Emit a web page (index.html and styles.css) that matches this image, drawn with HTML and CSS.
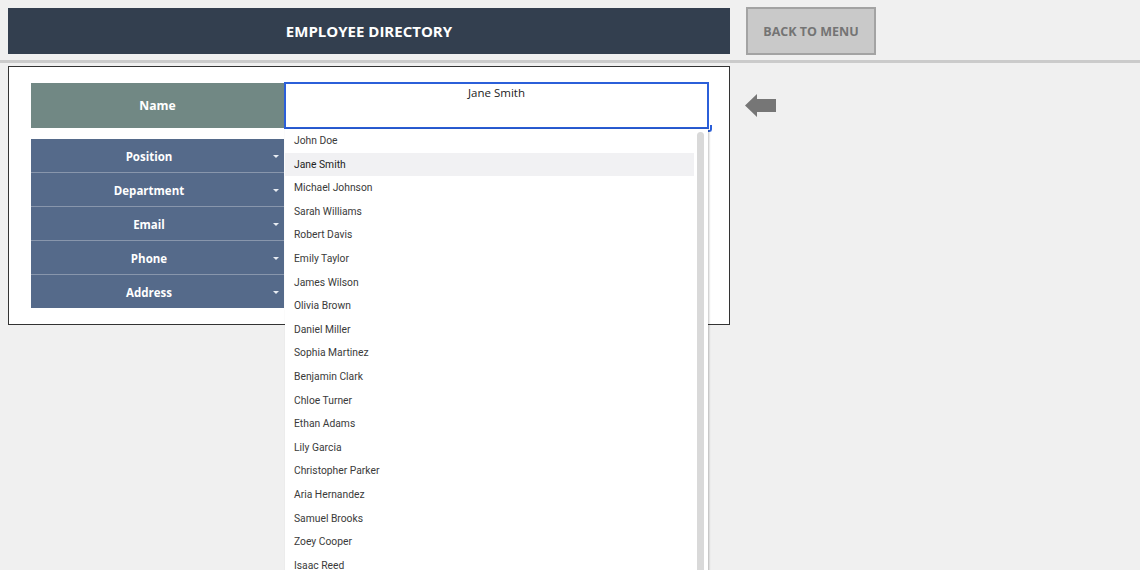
FILE: index.html
```html
<!DOCTYPE html>
<html>
<head>
<meta charset="utf-8">
<link rel="stylesheet" href="styles.css">
</head>
<body>
<div class="topbar">
  <div class="title">EMPLOYEE DIRECTORY</div>
  <div class="back-btn">BACK TO MENU</div>
</div>
<div class="main">
  <div class="panel">
    <div class="name-row">
      <div class="name-label">Name</div>
      <div class="name-field">
        <div class="name-input">Jane Smith</div>
        <span class="corner"></span>
        <div class="dropdown">
          <div class="list">
            <div class="item">John Doe</div>
            <div class="item active">Jane Smith</div>
            <div class="item">Michael Johnson</div>
            <div class="item">Sarah Williams</div>
            <div class="item">Robert Davis</div>
            <div class="item">Emily Taylor</div>
            <div class="item">James Wilson</div>
            <div class="item">Olivia Brown</div>
            <div class="item">Daniel Miller</div>
            <div class="item">Sophia Martinez</div>
            <div class="item">Benjamin Clark</div>
            <div class="item">Chloe Turner</div>
            <div class="item">Ethan Adams</div>
            <div class="item">Lily Garcia</div>
            <div class="item">Christopher Parker</div>
            <div class="item">Aria Hernandez</div>
            <div class="item">Samuel Brooks</div>
            <div class="item">Zoey Cooper</div>
            <div class="item">Isaac Reed</div>
          </div>
          <div class="scroll"><div class="thumb"></div></div>
        </div>
      </div>
    </div>
    <div class="fields">
      <div class="field"><span class="flabel">Position</span><span class="caret"></span></div>
      <div class="field"><span class="flabel">Department</span><span class="caret"></span></div>
      <div class="field"><span class="flabel">Email</span><span class="caret"></span></div>
      <div class="field"><span class="flabel">Phone</span><span class="caret"></span></div>
      <div class="field"><span class="flabel">Address</span><span class="caret"></span></div>
    </div>
  </div>
  <svg class="arrow" width="31" height="23" viewBox="0 0 31 23">
    <polygon points="0,11.5 12,0 12,5 31,5 31,18 12,18 12,23" fill="#767676"/>
  </svg>
</div>
</body>
</html>
```
FILE: styles.css
```css
html, body {
  margin: 0;
  padding: 0;
  overflow: hidden;
  height: 100%;
}
body {
  background: #f0f0f0;
  font-family: "Open Sans", "Liberation Sans", sans-serif;
}
.topbar {
  display: flex;
  align-items: center;
  padding: 7px 0 0 8px;
  height: 53px;
  box-sizing: content-box;
  border-bottom: 3px solid #cbcbcb;
}
.title {
  width: 722px;
  height: 46px;
  margin-top: -5px;
  background: #333f4f;
  color: #ffffff;
  font-weight: 700;
  font-size: 15px;
  display: flex;
  align-items: center;
  justify-content: center;
}
.back-btn {
  margin-left: 16px;
  margin-top: -5px;
  width: 130px;
  height: 48px;
  box-sizing: border-box;
  background: #c9c9c9;
  border: 2px solid #a3a3a3;
  color: #747474;
  font-weight: 700;
  font-size: 12.5px;
  display: flex;
  align-items: center;
  justify-content: center;
}
.main {
  display: flex;
  align-items: flex-start;
  padding: 3px 0 0 8px;
}
.panel {
  width: 722px;
  box-sizing: border-box;
  background: #ffffff;
  border: 1px solid #333333;
  padding: 15px 20px 16px 22px;
}
.name-row {
  display: flex;
  align-items: center;
  height: 47px;
}
.name-label {
  width: 253px;
  height: 45px;
  background: #718884;
  color: #ffffff;
  font-weight: 700;
  font-size: 12.2px;
  display: flex;
  align-items: center;
  justify-content: center;
}
.name-field {
  position: relative;
  width: 425px;
  height: 47px;
}
.name-input {
  height: 47px;
  box-sizing: border-box;
  border: 2px solid #2b5fd9;
  background: #ffffff;
  text-align: center;
  font-size: 11.5px;
  color: #222222;
  padding-top: 1px;
}
.corner {
  position: absolute;
  right: -3px;
  bottom: -3px;
  width: 3px;
  height: 5px;
  border-right: 2px solid #2b5fd9;
  border-bottom: 2px solid #2b5fd9;
  border-bottom-right-radius: 3px;
}
.dropdown {
  position: absolute;
  top: 47px;
  left: 1px;
  width: 423px;
  height: 445px;
  background: #ffffff;
  box-shadow: 1px 0 2px rgba(0,0,0,0.25);
  display: flex;
  z-index: 5;
}
.list {
  width: 409px;
}
.item {
  height: 23.6px;
  line-height: 23.6px;
  padding-left: 9px;
  font-family: Roboto, "Liberation Sans", sans-serif;
  font-size: 10.3px;
  color: #3a3a3a;
}
.item.active {
  background: #f1f1f3;
  color: #222222;
}
.scroll {
  width: 14px;
  padding-top: 3px;
  display: flex;
  justify-content: center;
}
.thumb {
  width: 7px;
  height: 100%;
  background: #d9d9d9;
  border-radius: 4px;
  margin-left: -2px;
}
.fields {
  margin-top: 10px;
  width: 253px;
}
.field {
  display: grid;
  grid-template-columns: 1fr 17px;
  align-items: center;
  height: 34px;
  background: #556a8a;
  border-top: 1px solid #8896ac;
  box-sizing: border-box;
  padding-top: 1px;
}
.field:first-child {
  border-top: none;
  height: 33px;
}
.flabel {
  text-align: center;
  color: #ffffff;
  font-weight: 700;
  font-size: 11.5px;
}
.caret {
  width: 0;
  height: 0;
  border-left: 3px solid transparent;
  border-right: 3px solid transparent;
  border-top: 3px solid #e8ecf2;
  margin-left: 6px;
}
.arrow {
  margin-left: 15px;
  margin-top: 28px;
}
```
